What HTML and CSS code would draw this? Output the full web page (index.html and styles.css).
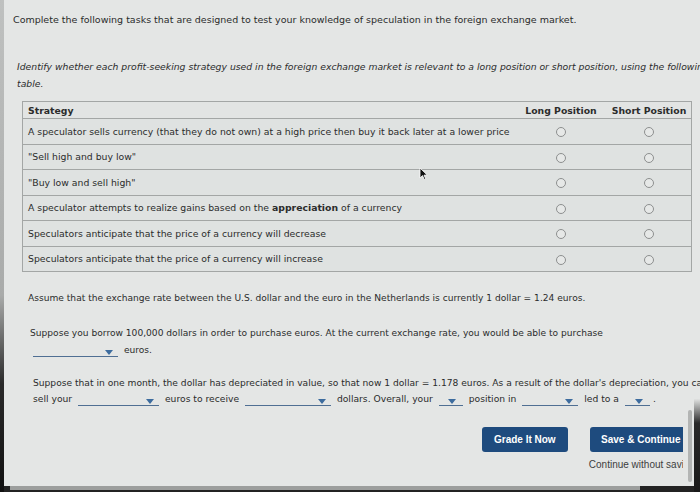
FILE: index.html
```html
<!DOCTYPE html>
<html lang="en">
<head>
<meta charset="utf-8">
<title>Speculation in the foreign exchange market</title>
<link rel="stylesheet" href="styles.css">
</head>
<body>
<div class="screen">
  <div class="edge-left"></div>
  <div class="content">
    <main class="page">
      <p class="intro">Complete the following tasks that are designed to test your knowledge of speculation in the foreign exchange market.</p>
      <p class="instr">Identify whether each profit-seeking strategy used in the foreign exchange market is relevant to a long position or short position, using the following<br>table.</p>

      <table class="strategies">
        <thead>
          <tr><th class="c-strat">Strategy</th><th class="c-long">Long Position</th><th class="c-short">Short Position</th></tr>
        </thead>
        <tbody>
          <tr><td>A speculator sells currency (that they do not own) at a high price then buy it back later at a lower price</td><td class="rc"><span class="radio"></span></td><td class="rc"><span class="radio"></span></td></tr>
          <tr><td>"Sell high and buy low"</td><td class="rc"><span class="radio"></span></td><td class="rc"><span class="radio"></span></td></tr>
          <tr><td>"Buy low and sell high"</td><td class="rc"><span class="radio"></span></td><td class="rc"><span class="radio"></span></td></tr>
          <tr><td>A speculator attempts to realize gains based on the <b>appreciation</b> of a currency</td><td class="rc"><span class="radio"></span></td><td class="rc"><span class="radio"></span></td></tr>
          <tr><td>Speculators anticipate that the price of a currency will decrease</td><td class="rc"><span class="radio"></span></td><td class="rc"><span class="radio"></span></td></tr>
          <tr><td>Speculators anticipate that the price of a currency will increase</td><td class="rc"><span class="radio"></span></td><td class="rc"><span class="radio"></span></td></tr>
        </tbody>
      </table>

      <p class="q q1">Assume that the exchange rate between the U.S. dollar and the euro in the Netherlands is currently 1 dollar = 1.24 euros.</p>
      <p class="q q2">Suppose you borrow 100,000 dollars in order to purchase euros. At the current exchange rate, you would be able to purchase<br><span class="dd w85"></span> euros.</p>
      <p class="q q3"><span class="q3-lead">Suppose that in one month, the dollar has depreciated in value, so that now 1 dollar = 1.178 euros. As a result of the dollar's depreciation, you can</span><br>sell your <span class="dd w81"></span> euros to receive <span class="dd w86"></span> dollars. Overall, your <span class="dd w24"></span> position in <span class="dd w56"></span> led to a <span class="dd w25"></span>.</p>

      <div class="actions-clip">
        <div class="actions">
          <button class="btn">Grade It Now</button>
          <div class="save-col">
            <button class="btn btn-save">Save &amp; Continue</button>
            <a class="skip">Continue without saving</a>
          </div>
        </div>
      </div>
    </main>
    <div class="hscroll"><span class="hthumb"></span></div>
  </div>
  <span class="vthumb"></span>
  <span class="edge-right"></span>
  <svg class="cursor" width="9" height="14" viewBox="0 0 9 14"><path d="M1 1 L1 11 L3.5 8.6 L5.4 12.6 L6.8 12 L5 8.2 L8.2 8 Z" fill="#111" stroke="#fff" stroke-width="0.8"/></svg>
</div>
</body>
</html>
```

FILE: styles.css
```css
html, body {
  margin: 0;
  padding: 0;
}
body {
  width: 700px;
  height: 492px;
  overflow: hidden;
  background: #e4e6e5;
  font-family: "DejaVu Sans", Verdana, sans-serif;
  color: #2b2c2c;
}
.screen {
  position: relative;
  display: flex;
  width: 700px;
  height: 492px;
  overflow: hidden;
}
.edge-left {
  width: 4px;
  flex: none;
  background: linear-gradient(#bfc1c0 0%, #a9abaa 60%, #2a2a2a 78%, #111 100%);
}
.content {
  flex: 1;
  display: flex;
  flex-direction: column;
  min-width: 0;
}
.page {
  flex: 1;
  min-height: 0;
}
p { margin: 0; }
.intro {
  margin: 14px 0 0 9px;
  font-size: 9.5px;
  line-height: 12px;
  white-space: nowrap;
}
.instr {
  margin: 32px 0 0 13px;
  font-size: 9.25px;
  line-height: 17px;
  font-style: italic;
  white-space: nowrap;
}
.strategies {
  margin: 9px 0 0 18px;
  width: 670px;
  border-collapse: collapse;
  font-size: 9.3px;
  border: 1px solid #a3a6a5;
}
.strategies th {
  height: 16px;
  padding: 0 5px;
  font-weight: bold;
  font-size: 9.3px;
  background: #e2e4e3;
  border-bottom: 1px solid #a3a6a5;
  white-space: nowrap;
}
.strategies th.c-strat { text-align: left; }
.strategies th.c-long { text-align: center; width: 92px; padding: 0; }
.strategies th.c-short { text-align: center; width: 84px; padding: 0; }
.strategies td {
  height: 24.5px;
  padding: 0 0 0 5px;
  background: #dfe2e1;
  border-bottom: 1px solid #a3a6a5;
  white-space: nowrap;
}
.strategies td.rc {
  text-align: center;
  padding: 0;
}
.radio {
  display: inline-block;
  width: 8px;
  height: 8px;
  border: 1px solid #8d8f8f;
  border-radius: 50%;
  background: #e6e8e7;
  vertical-align: middle;
}
.q {
  font-size: 9.1px;
  white-space: nowrap;
}
.q1 {
  margin: 19px 0 0 24px;
  line-height: 14px;
}
.q2 {
  margin: 20px 0 0 26px;
  line-height: 17px;
}
.q3 {
  margin: 16px 0 0 29px;
  line-height: 16px;
  font-size: 9.2px;
}
.q3-lead { font-size: 9.15px; }
.dd {
  display: inline-flex;
  justify-content: flex-end;
  align-items: flex-start;
  height: 9px;
  padding-right: 5px;
  box-sizing: border-box;
  border-bottom: 1px solid #4f6f93;
  vertical-align: -2px;
  margin: 0 3px;
}
.dd::after {
  content: "";
  margin-top: 2px;
  border-left: 4px solid transparent;
  border-right: 4px solid transparent;
  border-top: 5px solid #3d6c9e;
}
.w85 { width: 85px; margin-left: 3px; }
.w81 { width: 81px; }
.w86 { width: 86px; }
.w24 { width: 24px; padding-right: 7px; }
.w56 { width: 56px; }
.w25 { width: 25px; padding-right: 7px; }
.actions-clip {
  margin: 20px 17px 0 0;
  overflow: hidden;
}
.actions {
  display: flex;
  justify-content: flex-end;
  gap: 22px;
  margin-right: -12px;
}
.btn {
  height: 25px;
  padding: 0;
  width: 86px;
  border: none;
  border-radius: 3px;
  background: #1e4b7e;
  color: #fff;
  font-family: "Liberation Sans", Arial, sans-serif;
  font-weight: bold;
  font-size: 10px;
}
.btn-save { width: 102px; }
.save-col {
  display: flex;
  flex-direction: column;
  gap: 7px;
}
.skip {
  font-family: "Liberation Sans", Arial, sans-serif;
  font-size: 10px;
  color: #3d3e3e;
  white-space: nowrap;
  margin-left: -1px;
}
.hscroll {
  height: 6px;
  background: #232323;
  flex: none;
}
.hthumb {
  display: block;
  width: 630px;
  height: 4px;
  margin-left: 6px;
  background: #9c9e9d;
}
.vthumb {
  position: absolute;
  right: 8px;
  top: 410px;
  width: 4px;
  height: 72px;
  border-radius: 2px;
  background: #b3b5b4;
}
.edge-right {
  position: absolute;
  right: 0;
  top: 0;
  width: 6px;
  height: 492px;
  background: linear-gradient(rgba(30,30,30,0) 0%, rgba(30,30,30,0) 81%, #2a2a2a 86%, #1a1a1a 100%);
}
.cursor {
  position: absolute;
  left: 419px;
  top: 167px;
}
```
